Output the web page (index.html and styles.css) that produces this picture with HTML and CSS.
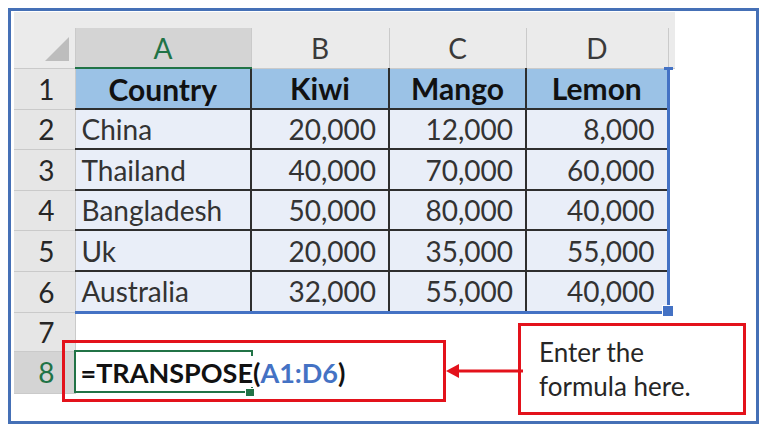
FILE: index.html
```html
<!DOCTYPE html>
<html>
<head>
<meta charset="utf-8">
<link rel="stylesheet" href="styles.css">
</head>
<body>
<div class="frame">
  <div class="sheet">
    <div class="topstrip"></div>
    <table class="grid">
      <colgroup><col class="c-rh"><col class="c-a"><col class="c-b"><col class="c-c"><col class="c-d"><col class="c-x"></colgroup>
      <tr class="hdr">
        <th class="corner"><svg width="26" height="26" viewBox="0 0 26 26"><polygon points="25,1 25,25 1,25" fill="#bdbdbd"/></svg></th>
        <th class="ch sel">A</th><th class="ch">B</th><th class="ch">C</th><th class="ch">D</th><th class="ch ext"></th>
      </tr>
      <tr class="r1">
        <th class="rh">1</th>
        <td class="d h">Country</td><td class="d h">Kiwi</td><td class="d h">Mango</td><td class="d h last top">Lemon</td><td class="x"></td>
      </tr>
      <tr class="r2">
        <th class="rh">2</th>
        <td class="d name">China</td><td class="d">20,000</td><td class="d">12,000</td><td class="d last">8,000</td><td class="x"></td>
      </tr>
      <tr class="r3">
        <th class="rh">3</th>
        <td class="d name">Thailand</td><td class="d">40,000</td><td class="d">70,000</td><td class="d last">60,000</td><td class="x"></td>
      </tr>
      <tr class="r4">
        <th class="rh">4</th>
        <td class="d name">Bangladesh</td><td class="d">50,000</td><td class="d">80,000</td><td class="d last">40,000</td><td class="x"></td>
      </tr>
      <tr class="r5">
        <th class="rh">5</th>
        <td class="d name">Uk</td><td class="d">20,000</td><td class="d">35,000</td><td class="d last">55,000</td><td class="x"></td>
      </tr>
      <tr class="r6">
        <th class="rh">6</th>
        <td class="d name">Australia</td><td class="d">32,000</td><td class="d">55,000</td><td class="d last corner-sel">40,000</td><td class="x"></td>
      </tr>
      <tr class="r7">
        <th class="rh">7</th>
        <td class="w"></td><td class="w"></td><td class="w"></td><td class="w"></td><td class="x"></td>
      </tr>
      <tr class="r8">
        <th class="rh sel8">8</th>
        <td class="w fcell">=TRANSPOSE(<span class="ref">A1:D6</span>)</td><td class="w"></td><td class="w"></td><td class="w"></td><td class="x"></td>
      </tr>
    </table>
  </div>
  <div class="redbox"></div>
  <svg class="arrow" width="78" height="20" viewBox="0 0 78 20">
    <line x1="12" y1="10" x2="78" y2="10" stroke="#e3121b" stroke-width="3"/>
    <polygon points="1,10 14,3 14,17" fill="#e3121b"/>
  </svg>
  <div class="callout">Enter the<br>formula here.</div>
</div>
</body>
</html>
```
FILE: styles.css
```css
* { box-sizing: border-box; }
body {
  margin: 0;
  background: #ffffff;
  font-family: Lato, "Liberation Sans", sans-serif;
}
.frame {
  position: relative;
  margin: 8px 0 0 8px;
  width: 751px;
  height: 416px;
  border: 3px solid #4570b6;
  background: #ffffff;
}
.sheet {
  margin: 1px 0 0 3px;
  width: 661px;
}
.topstrip {
  height: 16px;
  background: #ebebeb;
}
.grid {
  border-collapse: collapse;
  table-layout: fixed;
  width: 661px;
}
.c-rh { width: 61px; }
.c-a { width: 176px; }
.c-b { width: 138px; }
.c-c { width: 137px; }
.c-d { width: 142px; }
.c-x { width: 7px; }

.grid th, .grid td {
  padding: 0;
  line-height: 1;
  font-size: 28px;
  white-space: nowrap;
}
.hdr th {
  height: 40px;
  background: #ebebeb;
  border-right: 1px solid #cacaca;
  border-bottom: 1px solid #cacaca;
  font-weight: normal;
  color: #3a3a3a;
  text-align: center;
}
.hdr .corner {
  vertical-align: top;
  text-align: left;
  padding: 8px 0 0 30px;
}
.corner svg { display: block; }
.hdr .sel {
  background: #d4d4d4;
  color: #217346;
  border-bottom: 2px solid #217346;
}
.hdr .ext {
  border-right: none;
}
.rh {
  background: #e6e6e6;
  border-right: 1px solid #cacaca;
  border-bottom: 1px solid #cacaca;
  font-weight: normal;
  color: #262626;
  text-align: center;
  padding-left: 4px !important;
}
.rh.sel8 {
  background: #d4d4d4;
  color: #217346;
}
.r1 { height: 41px; }
.r2 { height: 40px; }
.r3 { height: 41px; }
.r4 { height: 40px; }
.r5 { height: 41px; }
.r6 { height: 41px; }
.r7 { height: 39px; }
.r8 { height: 42px; }

.d {
  background: #e9eef8;
  border-right: 2px solid #2e2e2e;
  border-bottom: 2px solid #2e2e2e;
  color: #333333;
  text-align: right;
  padding: 0 12px 0 6px !important;
}
.d.name { text-align: left; }
.d.h {
  background: #9bc2e6;
  color: #111111;
  font-weight: bold;
  font-size: 30px;
  text-align: center;
  padding: 0 !important;
}
.d.last {
  border-right: 3px solid #4472c4;
  position: relative;
}
.r6 .d {
  border-bottom: 3px solid #4472c4;
}
.d.top::after {
  content: "";
  position: absolute;
  top: -2px;
  right: -6px;
  width: 9px;
  height: 3px;
  background: #4472c4;
}
.d.corner-sel::after {
  content: "";
  position: absolute;
  bottom: -6px;
  right: -7px;
  width: 10px;
  height: 10px;
  background: #4472c4;
  border: 1px solid #ffffff;
}
.x {
  background: #ffffff;
}
.w {
  background: #ffffff;
}
.fcell {
  position: relative;
  font-weight: bold;
  font-size: 27px !important;
  color: #111111;
  padding-left: 5px !important;
  overflow: visible;
}
.fcell .ref { color: #4472c4; }
.fcell::before {
  content: "";
  position: absolute;
  left: -2px;
  top: -1px;
  right: -2px;
  bottom: 0;
  border: 2px solid #217346;
  border-right: none;
  background:
    linear-gradient(#217346, #217346) right top / 2px 4px no-repeat,
    linear-gradient(#217346, #217346) right bottom / 2px 4px no-repeat;
}
.fcell::after {
  content: "";
  position: absolute;
  right: -4px;
  bottom: -4px;
  width: 8px;
  height: 7px;
  background: #217346;
  border: 1px solid #ffffff;
}
.redbox {
  position: absolute;
  left: 51px;
  top: 329px;
  width: 384px;
  height: 62px;
  border: 3px solid #e3121b;
}
.arrow {
  position: absolute;
  left: 434px;
  top: 350px;
}
.callout {
  position: absolute;
  left: 507px;
  top: 312px;
  width: 228px;
  height: 92px;
  border: 3px solid #e3121b;
  padding: 9px 0 0 18px;
  font-size: 26px;
  line-height: 34px;
  color: #262626;
}
```
